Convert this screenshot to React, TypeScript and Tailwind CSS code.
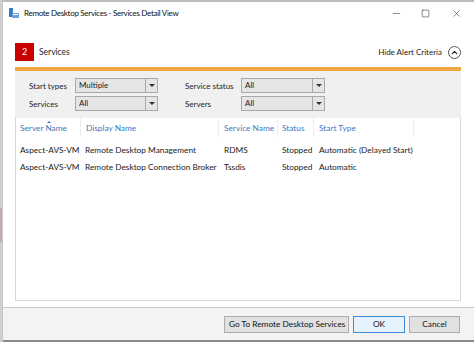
import { ChevronUp, Minus, Square, X } from 'lucide-react';

const font = { fontFamily: 'Lato, "Noto Sans", sans-serif' };

function Select({ value, width }: { value: string; width: string }) {
  return (
    <div className={`${width} h-[15px] flex border border-[#a9a9a9] bg-[#e5e5e5]`}>
      <div className="flex-1 px-[3px] text-[8px] leading-[13px] text-[#1a1a1a]">{value}</div>
      <div className="w-[12px] border-l border-[#a9a9a9] flex items-center justify-center">
        <div className="w-0 h-0 border-l-[3px] border-r-[3px] border-t-[3px] border-l-transparent border-r-transparent border-t-[#333]" />
      </div>
    </div>
  );
}

const rows = [
  ['Aspect-AVS-VM', 'Remote Desktop Management', 'RDMS', 'Stopped', 'Automatic (Delayed Start)'],
  ['Aspect-AVS-VM', 'Remote Desktop Connection Broker', 'Tssdis', 'Stopped', 'Automatic'],
];

export default function App() {
  return (
    <div className="w-[474px] h-[342px] flex bg-[#cfcfcf] overflow-hidden whitespace-nowrap" style={font}>
      <div className="w-[2px] flex flex-col">
        <div className="h-[208px]" />
        <div className="h-[34px] bg-[#c9a9b0]" />
      </div>
      <div className="flex-1 flex flex-col bg-white border-t-[2px] border-[#bdbdbd] border-l border-l-[#c8c8c8]">
        {/* Title bar */}
        <div className="h-[22px] flex items-center">
          <svg width="12" height="12" viewBox="0 0 12 12" className="ml-[5px]">
            <rect x="1" y="1" width="4" height="9" fill="#3b7bc4" />
            <rect x="4" y="6" width="7" height="5" rx="1" fill="#6fa3d8" />
            <rect x="5" y="7" width="5" height="1" fill="#fff" />
          </svg>
          <span className="ml-[4px] text-[8px] tracking-[-0.3px] text-[#111]">Remote Desktop Services - Services Detail View</span>
          <div className="flex-1" />
          <Minus className="w-[11px] h-[11px] text-[#333] mr-[19px]" strokeWidth={1.2} />
          <Square className="w-[9px] h-[9px] text-[#333] mr-[21px]" strokeWidth={1.5} />
          <X className="w-[11px] h-[11px] text-[#333] mr-[12px]" strokeWidth={1.2} />
        </div>

        <div className="flex-1 flex flex-col pl-[12px] pr-[13px]">
          {/* Alert row */}
          <div className="mt-[19px] h-[18px] flex items-center">
            <div className="w-[19px] h-[18px] bg-[#c90000] text-white text-[9px] flex items-center justify-center">2</div>
            <span className="ml-[5px] text-[8.5px] text-[#222]">Services</span>
            <div className="flex-1" />
            <span className="text-[8px] text-[#222]">Hide Alert Criteria</span>
            <div className="ml-[6px] w-[13px] h-[13px] rounded-full border border-[#555] flex items-center justify-center">
              <ChevronUp className="w-[9px] h-[9px] text-[#222]" strokeWidth={3} />
            </div>
          </div>

          <div className="mt-[6px] h-[4px] bg-[#f2a745]" />

          {/* Filters */}
          <div className="bg-[#f0f0f0] h-[47px] flex flex-col justify-center gap-[3px] pl-[14px] text-[8px] text-[#222]">
            <div className="flex items-center">
              <span className="w-[46px]">Start types</span>
              <Select value="Multiple" width="w-[83px]" />
              <span className="ml-[27px] w-[56px]">Service status</span>
              <Select value="All" width="w-[84px]" />
            </div>
            <div className="flex items-center">
              <span className="w-[46px]">Services</span>
              <Select value="All" width="w-[83px]" />
              <span className="ml-[27px] w-[56px]">Servers</span>
              <Select value="All" width="w-[84px]" />
            </div>
          </div>

          {/* Table */}
          <div className="h-[183px] border border-[#d6d6d6] border-t-0 text-[8.3px]">
            <div className="h-[19px] flex text-[#3a78c2] items-end">
              <div className="w-[65px] h-full pl-[4px] border-r border-[#ececec] flex items-end pb-[3px] relative">
                Server Name
                <div className="absolute left-[31px] top-[3px] w-0 h-0 border-l-[2px] border-r-[2px] border-b-[2px] border-l-transparent border-r-transparent border-b-[#3a78c2]" />
              </div>
              <div className="w-[138px] h-full pl-[5px] border-r border-[#ececec] flex items-end pb-[3px]">Display Name</div>
              <div className="w-[59px] h-full pl-[5px] border-r border-[#ececec] flex items-end pb-[3px]">Service Name</div>
              <div className="w-[36px] h-full pl-[4px] border-r border-[#ececec] flex items-end pb-[3px]">Status</div>
              <div className="w-[100px] h-full pl-[5px] border-r border-[#ececec] flex items-end pb-[3px]">Start Type</div>
            </div>
            <div className="mt-[5px] flex flex-col">
              {rows.map((r) => (
                <div key={r[1]} className="h-[17px] flex items-center text-[#1a1a1a]">
                  <div className="w-[65px] pl-[4px]">{r[0]}</div>
                  <div className="w-[138px] pl-[4px]">{r[1]}</div>
                  <div className="w-[59px] pl-[5px]">{r[2]}</div>
                  <div className="w-[36px] pl-[4px]">{r[3]}</div>
                  <div className="pl-[5px]">{r[4]}</div>
                </div>
              ))}
            </div>
          </div>
          <div className="flex-1" />
        </div>

        {/* Footer */}
        <div className="h-[33px] border-t border-[#c8c8c8] bg-[#f3f3f3] flex items-center justify-end gap-[4px] pr-[14px] text-[8.3px] text-[#111]">
          <button className="h-[17px] px-[4px] w-[125px] border border-[#adadad] bg-[#e1e1e1]">Go To Remote Desktop Services</button>
          <button className="h-[17px] w-[52px] border border-[#3c8ad8] bg-[#e5f1fb]">OK</button>
          <button className="h-[17px] w-[51px] border border-[#adadad] bg-[#e1e1e1]">Cancel</button>
        </div>
        <div className="h-[2px] bg-[#8a8a8a]" />
      </div>
    </div>
  );
}
